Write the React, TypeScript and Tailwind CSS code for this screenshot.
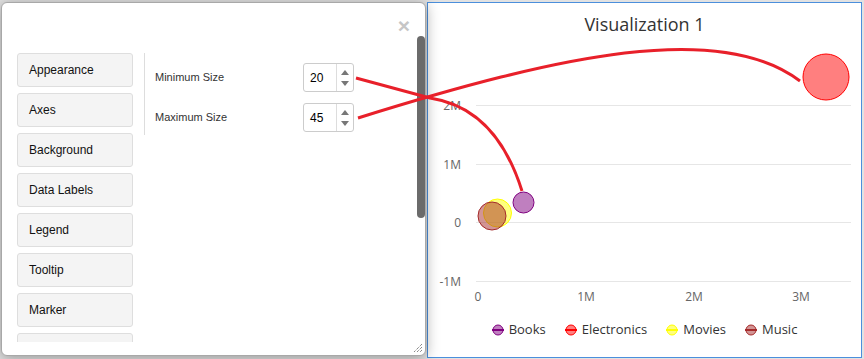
const tabs = ['Appearance', 'Axes', 'Background', 'Data Labels', 'Legend', 'Tooltip', 'Marker', ''];

const series = [
  { name: 'Books', color: '#800080', fill: 'rgba(128,0,128,0.5)', cx: 523.5, cy: 202.5, r: 10.5 },
  { name: 'Electronics', color: '#ff0000', fill: 'rgba(255,0,0,0.5)', cx: 826, cy: 77, r: 23 },
  { name: 'Movies', color: '#ffff00', fill: 'rgba(255,255,0,0.5)', cx: 497.5, cy: 213, r: 14 },
  { name: 'Music', color: '#a52a2a', fill: 'rgba(165,42,42,0.5)', cx: 492, cy: 216, r: 14 },
];

const yTicks = [
  { label: '2M', y: 105.5 },
  { label: '1M', y: 164.5 },
  { label: '0', y: 222.5 },
  { label: '-1M', y: 281.5 },
];

const xTicks = [
  { label: '0', x: 478 },
  { label: '1M', x: 586 },
  { label: '2M', x: 694 },
  { label: '3M', x: 801 },
];

function SizeInput({ value }: { value: number }) {
  return (
    <div className="flex w-[51px] h-[29px] border border-[#cccccc] rounded-[3px] bg-white">
      <div className="flex-1 flex items-center pl-[6px] text-[12px] text-black">{value}</div>
      <div className="w-[17px] border-l border-[#dddddd] flex flex-col items-center justify-center gap-[6px]">
        <svg width="8" height="5" viewBox="0 0 8 5"><path d="M0 5 L4 0 L8 5 Z" fill="#777" /></svg>
        <svg width="8" height="5" viewBox="0 0 8 5"><path d="M0 0 L4 5 L8 0 Z" fill="#777" /></svg>
      </div>
    </div>
  );
}

function SettingsDialog() {
  return (
    <div className="relative z-10 mt-[2px] ml-[1px] w-[425px] h-[354px] shrink-0 bg-white border border-[#a8a8a8] rounded-[6px] shadow-[0_2px_14px_rgba(0,0,0,0.35)] font-['Liberation_Sans',Arial,sans-serif]">
      <div className="h-[50px] flex justify-end items-start pt-[12px] pr-[15px]">
        <span className="text-[21px] font-bold leading-none text-[#c6c6c6]">×</span>
      </div>
      <div className="absolute right-0 top-[33px] w-[8px] h-[182px] rounded-[4px] bg-[#6b6b6b]" />
      <div className="flex pl-[15px]">
        <div className="w-[116px] h-[289px] overflow-hidden flex flex-col gap-[6px]">
          {tabs.map((t, i) => (
            <div key={i} className="h-[34px] shrink-0 flex items-center pl-[11px] bg-[#f4f4f4] border border-[#dedede] rounded-[3px] text-[12px] text-[#111]">
              {t}
            </div>
          ))}
        </div>
        <div className="ml-[11px] w-px h-[82px] bg-[#dddddd]" />
        <div className="pl-[10px] pt-[10px] flex flex-col gap-[11px]">
          {[['Minimum Size', 20], ['Maximum Size', 45]].map(([label, v]) => (
            <div key={label} className="flex items-center">
              <span className="w-[148px] text-[11px] text-[#333]">{label}</span>
              <SizeInput value={v as number} />
            </div>
          ))}
        </div>
      </div>
      <svg className="absolute right-[3px] bottom-[3px]" width="9" height="9" viewBox="0 0 9 9">
        <path d="M9 1 L1 9 M9 4 L4 9 M9 7 L7 9" stroke="#555" strokeWidth="1" strokeDasharray="1 1" />
      </svg>
    </div>
  );
}

function ChartPanel() {
  return (
    <div className="mt-[2px] w-[435px] h-[356px] shrink-0 bg-white border border-[#4b8fdc] flex flex-col font-['Open_Sans',sans-serif]">
      <div className="h-[37px] pt-[9px] text-center text-[18px] leading-[24px] text-[#333]">Visualization 1</div>
      <svg width="433" height="272" viewBox="428 40 433 272" className="block">
        {yTicks.map(t => (
          <g key={t.label}>
            <line x1="476" x2="851" y1={t.y} y2={t.y} stroke="#e6e6e6" strokeWidth="1" />
            <text x="461" y={t.y + 4} textAnchor="end" fontSize="12" fill="#666">{t.label}</text>
          </g>
        ))}
        {xTicks.map(t => (
          <text key={t.label} x={t.x} y="301" textAnchor="middle" fontSize="12" fill="#666">{t.label}</text>
        ))}
        {series.map(s => (
          <circle key={s.name} cx={s.cx} cy={s.cy} r={s.r} fill={s.fill} stroke={s.color} strokeWidth="1" />
        ))}
      </svg>
      <div className="mt-[10px] h-[16px] flex justify-center items-center gap-[19px] text-[13px] text-[#333]">
        {series.map(s => (
          <div key={s.name} className="flex items-center gap-[5px]">
            <svg width="12" height="12" viewBox="0 0 12 12">
              <circle cx="6" cy="6" r="5" fill={s.fill} stroke={s.color} strokeWidth="1" />
              <line x1="0" x2="12" y1="6" y2="6" stroke={s.color} strokeWidth="2" />
            </svg>
            <span>{s.name}</span>
          </div>
        ))}
      </div>
    </div>
  );
}

export default function App() {
  return (
    <div className="relative w-[864px] h-[359px] overflow-hidden bg-[#e2e2e2] flex gap-[1px]">
      <SettingsDialog />
      <ChartPanel />
      {/* annotation arrows drawn over the screenshot */}
      <svg className="absolute inset-0 z-20 pointer-events-none" width="864" height="359" viewBox="0 0 864 359">
        <path d="M356 78 L430 98 Q496 108 522 191" fill="none" stroke="#e8202a" strokeWidth="3" />
        <path d="M358 118 C560 55 720 20 800 81" fill="none" stroke="#e8202a" strokeWidth="3" />
      </svg>
    </div>
  );
}
